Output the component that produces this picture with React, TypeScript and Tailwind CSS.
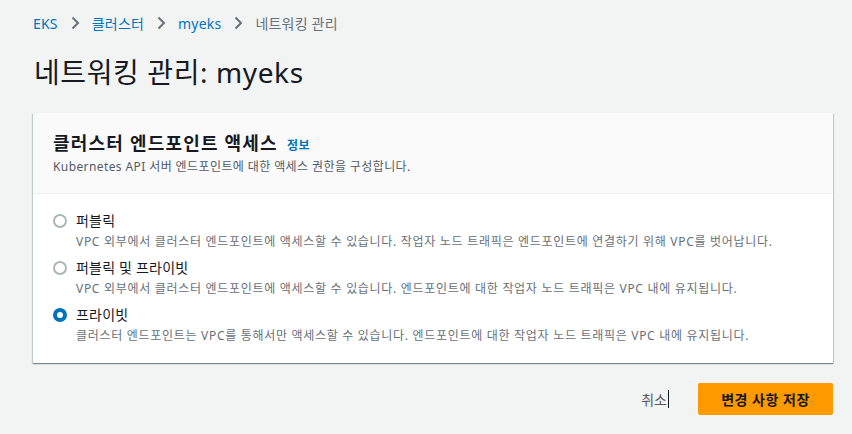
import React from "react";

const font = { fontFamily: '"Noto Sans", "Noto Sans CJK KR", sans-serif' };

function Chevron() {
  return (
    <svg width="16" height="16" viewBox="0 0 16 16" className="mx-[9px]">
      <path d="M5.5 2.5 L11 8 L5.5 13.5" fill="none" stroke="#687078" strokeWidth="2" />
    </svg>
  );
}

function Radio({ checked }: { checked?: boolean }) {
  return checked ? (
    <span className="mt-[4px] box-border block h-[14px] w-[14px] shrink-0 rounded-full border-[4px] border-[#0073bb] bg-white" />
  ) : (
    <span className="mt-[4px] box-border block h-[14px] w-[14px] shrink-0 rounded-full border-[2px] border-[#aab7b8] bg-white" />
  );
}

function Option({ label, desc, checked }: { label: string; desc: string; checked?: boolean }) {
  return (
    <div className="flex items-start gap-[9px]">
      <Radio checked={checked} />
      <div className="flex flex-col">
        <div className="text-[14px] leading-[22px] tracking-[0.2px] text-[#16191f]">{label}</div>
        <div className="mt-[2px] text-[12px] leading-[16px] tracking-[0.7px] text-[#687078]">{desc}</div>
      </div>
    </div>
  );
}

export default function App() {
  return (
    <div className="min-h-[434px] w-[852px] bg-[#f2f3f3] pl-[33px]" style={font}>
      <div className="flex h-[46px] items-center text-[14px] tracking-[0.2px]">
        <span className="text-[#0073bb]">EKS</span>
        <Chevron />
        <span className="text-[#0073bb]">클러스터</span>
        <Chevron />
        <span className="text-[#0073bb]">myeks</span>
        <Chevron />
        <span className="text-[#687078]">네트워킹 관리</span>
      </div>
      <h1 className="mt-[6px] pl-[1px] text-[28px] leading-[40px] font-normal tracking-[0.6px] text-[#16191f]">
        네트워킹 관리: myeks
      </h1>
      <div className="mt-[21px] w-[800px] bg-white shadow-[0_1px_1px_0_rgba(0,28,36,0.3),1px_1px_1px_0_rgba(0,28,36,0.15),-1px_1px_1px_0_rgba(0,28,36,0.15)]">
        <div className="flex h-[81px] flex-col border-b border-[#eaeded] bg-[#fafafa] px-[20px] pt-[17px]">
          <div className="flex items-baseline gap-[9px]">
            <span className="text-[18px] leading-[26px] font-bold tracking-[1.2px] text-[#16191f]">클러스터 엔드포인트 액세스</span>
            <span className="text-[12px] font-bold tracking-[0.5px] text-[#0073bb]">정보</span>
          </div>
          <div className="mt-[2px] text-[12px] leading-[18px] tracking-[0.4px] text-[#545b64]">
            Kubernetes API 서버 엔드포인트에 대한 액세스 권한을 구성합니다.
          </div>
        </div>
        <div className="flex flex-col gap-[7px] px-[20px] pt-[16px] pb-[19px]">
          <Option
            label="퍼블릭"
            desc="VPC 외부에서 클러스터 엔드포인트에 액세스할 수 있습니다. 작업자 노드 트래픽은 엔드포인트에 연결하기 위해 VPC를 벗어납니다."
          />
          <Option
            label="퍼블릭 및 프라이빗"
            desc="VPC 외부에서 클러스터 엔드포인트에 액세스할 수 있습니다. 엔드포인트에 대한 작업자 노드 트래픽은 VPC 내에 유지됩니다."
          />
          <Option
            checked
            label="프라이빗"
            desc="클러스터 엔드포인트는 VPC를 통해서만 액세스할 수 있습니다. 엔드포인트에 대한 작업자 노드 트래픽은 VPC 내에 유지됩니다."
          />
        </div>
      </div>
      <div className="mt-[20px] flex w-[800px] items-center justify-end">
        <span className="text-[14px] text-[#545b64]">취소</span>
        <span className="ml-[1px] block h-[18px] w-[1px] bg-[#16191f]" />
        <button className="ml-[29px] h-[32px] w-[135px] rounded-[2px] bg-[#ff9900] text-[14px] font-bold tracking-[0.5px] text-[#16191f]">
          변경 사항 저장
        </button>
      </div>
    </div>
  );
}
